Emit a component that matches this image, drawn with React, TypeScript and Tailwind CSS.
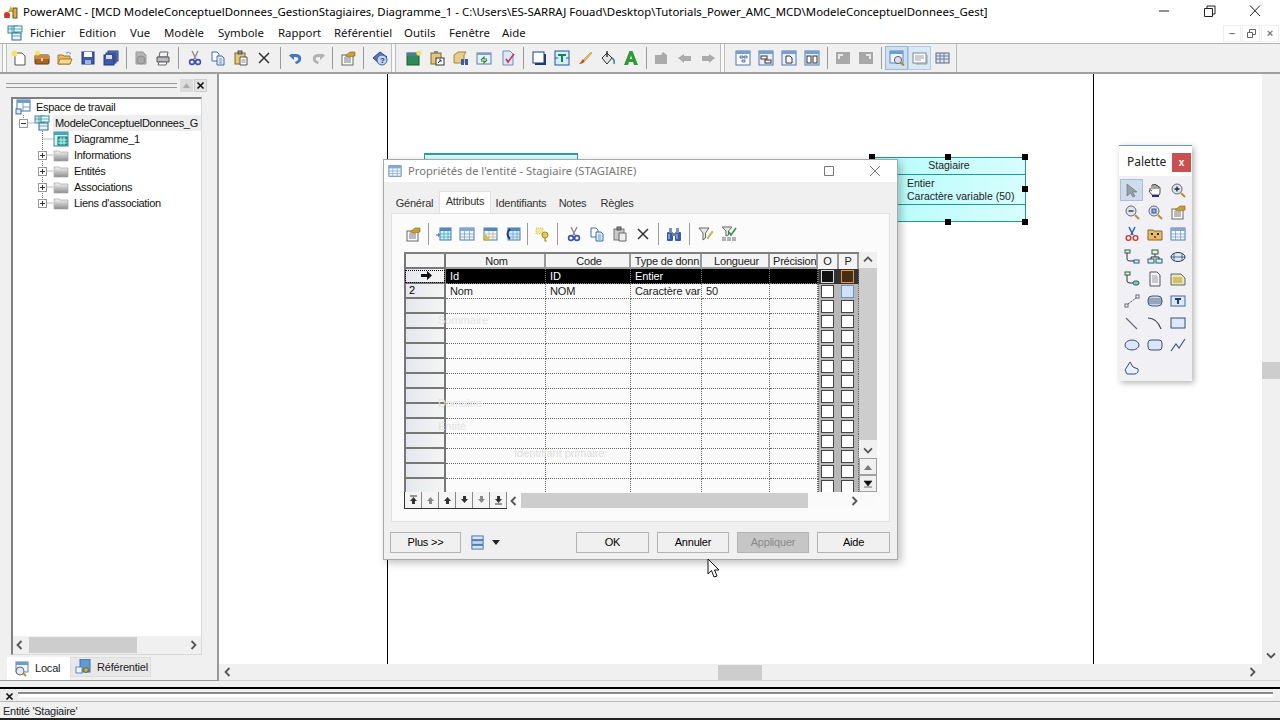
import React from 'react';

type IconProps = { name: string; size?: number };

// 16x16 drawings of the PowerAMC toolbar bitmaps
const drawings: Record<string, React.ReactNode> = {
  app: (<><path d="M1 14 L4 8 L7 14Z" fill="#c0392b" /><circle cx="4" cy="11" r="3" fill="#d9342b" /><path d="M5 8 L8 2 L10 8Z" fill="#e0a030" /><rect x="10" y="4" width="4" height="10" fill="#e6b422" stroke="#333" strokeWidth=".8" /></>),
  model: (<><rect x="1" y="1" width="9" height="7" fill="#cfe8f0" stroke="#3a8a9a" /><rect x="7" y="1" width="8" height="6" fill="#dff" stroke="#3a8a9a" /><rect x="5" y="8" width="9" height="7" fill="#e8f4f8" stroke="#2a6a9a" /><path d="M1 4h14M5 1v6M5 11h9" stroke="#3a8a9a" strokeWidth=".7" /></>),
  workspace: (<><rect x="2" y="1" width="13" height="11" fill="#fff" stroke="#3c6ea5" /><rect x="2" y="1" width="13" height="3" fill="#6d9ccd" /><path d="M8 4v8M8 8h7" stroke="#7a9cc0" /><rect x="1" y="10" width="5" height="5" fill="#dde8f5" stroke="#3c6ea5" /></>),
  diagram: (<><rect x="1" y="1" width="14" height="14" fill="#d6f0f4" stroke="#3a8a9a" /><rect x="1" y="1" width="14" height="3" fill="#4aa3b5" /><rect x="5" y="6" width="9" height="8" fill="#2fb3a8" stroke="#0a6a6a" /><path d="M5 9h9M5 12h9M8 6v8M11 6v8" stroke="#d6fff8" strokeWidth=".8" /></>),
  folder: (<><path d="M1 4 L6 4 L7 5 L15 5 L15 14 L1 14Z" fill="url(#fold)" stroke="#a8a8a8" strokeWidth=".7" /><defs><linearGradient id="fold" x1="0" x2="0" y1="0" y2="1"><stop offset="0" stopColor="#f4f4f4" /><stop offset="1" stopColor="#8e8e8e" /></linearGradient></defs></>),
  newdoc: (<><path d="M4 3 H11 L14 6 V15 H4Z" fill="#fff" stroke="#555" /><circle cx="3.5" cy="3.5" r="3" fill="#f2e36a" /></>),
  case: (<><rect x="1" y="5" width="14" height="9" rx="1" fill="#a5652a" stroke="#6b3c14" /><rect x="1" y="5" width="14" height="4" fill="#c78a45" /><circle cx="3.5" cy="3" r="2.5" fill="#f2e36a" /><rect x="7" y="8" width="2" height="3" fill="#f0d070" /></>),
  open: (<><path d="M1 5 H6 L7 6 H13 V14 H1Z" fill="#e8b860" stroke="#a87a28" /><path d="M3 9 H15 L13 14 H1Z" fill="#f6d998" stroke="#a87a28" /><path d="M9 3 Q12 1 14 4" stroke="#5a8fc0" fill="none" /></>),
  save: (<><rect x="2" y="2" width="12" height="12" fill="#3c5aa8" stroke="#223a78" /><rect x="4" y="2" width="8" height="5" fill="#fff" /><rect x="5" y="10" width="6" height="4" fill="#9fb4dc" /></>),
  saveall: (<><rect x="5" y="1" width="10" height="10" fill="#6a80bc" stroke="#2c4484" /><rect x="3" y="3" width="10" height="10" fill="#4f68ac" stroke="#2c4484" /><rect x="1" y="5" width="10" height="10" fill="#3c5aa8" stroke="#223a78" /><rect x="3" y="5" width="6" height="4" fill="#dde" /></>),
  preview: (<><path d="M3 2 H10 L13 5 V14 H3Z" fill="#b4b4b4" stroke="#9a9a9a" /><circle cx="8" cy="10" r="4" fill="#a8a8a8" stroke="#8e8e8e" /></>),
  print: (<><path d="M5 2 H13 L12 7 H4Z" fill="#f4f4f4" stroke="#666" /><path d="M2 7 H14 V12 H2Z" fill="#b8b8c0" stroke="#555" /><path d="M4 12 H12 L11 15 H3Z" fill="#fff" stroke="#666" /></>),
  cut: (<><path d="M5 1 L9 9 M11 1 L7 9" stroke="#8a8a8a" strokeWidth="1.4" /><circle cx="5" cy="12" r="2.4" fill="none" stroke="#3c50b0" strokeWidth="1.6" /><circle cx="11" cy="12" r="2.4" fill="none" stroke="#3c50b0" strokeWidth="1.6" /></>),
  copy: (<><path d="M2 2 H7 L9 4 V11 H2Z" fill="#fff" stroke="#3d6db5" /><path d="M7 6 H12 L14 8 V15 H7Z" fill="#e4eefa" stroke="#3d6db5" /><path d="M9 9h3M9 11h3M9 13h3" stroke="#3d6db5" strokeWidth=".7" /></>),
  paste: (<><rect x="2" y="3" width="10" height="11" fill="#e4c878" stroke="#84692a" /><rect x="5" y="1" width="4" height="3" fill="#888" stroke="#555" /><path d="M7 7 H14 V15 H7Z" fill="#fff" stroke="#555" /><path d="M8.5 10h4M8.5 12h4" stroke="#555" strokeWidth=".7" /></>),
  pastegray: (<><rect x="2" y="3" width="10" height="11" fill="#c8c8c8" stroke="#777" /><rect x="5" y="1" width="4" height="3" fill="#888" stroke="#555" /><path d="M7 7 H14 V15 H7Z" fill="#eee" stroke="#666" /></>),
  del: (<path d="M3 3 L13 13 M13 3 L3 13" stroke="#333" strokeWidth="1.5" />),
  undo: (<path d="M3 4 H9 Q14 5 13 10 Q12 13 8 14 L7 12 Q10 11 10.5 9 Q10 7 8 7 H6 V10 L1 5.5 L6 2Z" fill="#3f78c8" />),
  redo: (<path d="M13 4 H7 Q2 5 3 10 Q4 13 8 14 L9 12 Q6 11 5.5 9 Q6 7 8 7 H10 V10 L15 5.5 L10 2Z" fill="#b2b2b2" />),
  props: (<><rect x="2" y="5" width="11" height="10" fill="#fff" stroke="#666" /><path d="M4 8h7M4 10h7M4 12h7" stroke="#777" /><path d="M5 6 L10 2 H15 V6 L9 7Z" fill="#c9a030" stroke="#7f6418" strokeWidth=".6" /></>),
  help: (<><path d="M1 8 L8 2 L15 7 L8 14Z" fill="#5578c0" stroke="#2a4488" /><circle cx="10" cy="10" r="5" fill="#c5d4f0" stroke="#4060a0" /><text x="8" y="13" fontSize="8" fontWeight="700" fill="#223a78" fontFamily="Liberation Sans">?</text></>),
  newpkg: (<><rect x="1" y="3" width="12" height="12" fill="#2f8a56" stroke="#1c5a38" /><rect x="1" y="3" width="12" height="3" fill="#4d78a8" /><circle cx="13" cy="3" r="2.6" fill="#f2e36a" /></>),
  shortcut: (<><rect x="2" y="3" width="10" height="11" fill="#e4c878" stroke="#84692a" /><rect x="5" y="1" width="4" height="3" fill="#888" /><rect x="7" y="8" width="8" height="7" fill="#fff" stroke="#333" /><path d="M9 13 L12 10 M10 10h2v2" stroke="#1c3c9c" fill="none" /></>),
  findbox: (<><path d="M1 5 L5 2 H13 L11 5 V13 H1Z" fill="#e8cc8c" stroke="#a8883c" /><rect x="8" y="9" width="3" height="6" fill="#3c5aa8" /><rect x="12" y="9" width="3" height="6" fill="#3c5aa8" /></>),
  refresh: (<><rect x="1" y="3" width="14" height="11" fill="#e8f0f8" stroke="#5a7ea8" /><rect x="1" y="3" width="14" height="2" fill="#7aa0c8" /><path d="M5 10 L8 7 V9 H11 M11 10 L8 13 V11 H5" stroke="#2f8a36" fill="none" strokeWidth="1.1" /></>),
  check: (<><path d="M3 1 H10 L13 4 V15 H3Z" fill="#dbe8f8" stroke="#6a90c0" /><path d="M6 9 L8 12 L14 4" stroke="#c8324a" fill="none" strokeWidth="1.6" /></>),
  shadowrect: (<><rect x="4" y="4" width="11" height="11" fill="#1d3c78" /><rect x="2" y="2" width="11" height="11" fill="#fff" stroke="#1d3c78" /></>),
  tframe: (<><rect x="1" y="1" width="14" height="14" fill="#d7ecf4" stroke="#1d5a9c" /><path d="M4 4 H12 V6 H9 V12 H7 V6 H4Z" fill="#0e8a4a" /><path d="M1 8h3M12 8h3" stroke="#1d5a9c" /></>),
  brush: (<><path d="M14 2 L7 9 L8.5 10.5 L15 3Z" fill="#e4c04c" stroke="#a8882c" strokeWidth=".5" /><path d="M6 9 L8 11 Q6 14 2 14 Q4 12 6 9Z" fill="#c8482c" /></>),
  fill: (<><path d="M2 8 L7 3 L12 8 L7 14Z" fill="#e4e4e4" stroke="#333" /><path d="M7 1v6" stroke="#222" strokeWidth="1.3" /><path d="M12 8 Q15 10 14 14" stroke="#2f9a8a" fill="none" strokeWidth="1.6" /></>),
  green: (<path d="M6.5 1 H9.5 L15 15 H11 L10 12 H6 L5 15 H1Z M6.8 9 H9.2 L8 5.5Z" fill="#2f9a36" fillRule="evenodd" />),
  graybox: (<path d="M2 5 H8 L10 2 L14 5 V14 H2Z" fill="#ababab" />),
  grayleft: (<path d="M1 8 L7 4 V6 H14 V11 H7 V13Z" fill="#ababab" />),
  grayright: (<path d="M15 8 L9 4 V6 H2 V11 H9 V13Z" fill="#ababab" />),
  diaga: (<><rect x="1" y="1" width="14" height="14" fill="#fff" stroke="#4a78b0" /><rect x="1" y="1" width="14" height="3" fill="#74a0d0" /><path d="M5 6h3v2H5zM9 6h3v2H9zM7 10h3v2H7z" fill="#d8ecf4" stroke="#1c4c88" strokeWidth=".7" /></>),
  diagb: (<><rect x="1" y="1" width="14" height="14" fill="#eef" stroke="#4a78b0" /><rect x="1" y="1" width="14" height="3" fill="#74a0d0" /><rect x="3" y="6" width="6" height="3" fill="#fff" stroke="#333" /><rect x="7" y="10" width="6" height="3" fill="#fff" stroke="#333" /></>),
  diagc: (<><rect x="1" y="1" width="14" height="14" fill="#eef" stroke="#4a78b0" /><rect x="1" y="1" width="14" height="3" fill="#74a0d0" /><path d="M5 6 H9 L11 8 V13 H5Z" fill="#fff" stroke="#333" /></>),
  diagd: (<><rect x="1" y="1" width="14" height="14" fill="#eef" stroke="#4a78b0" /><rect x="1" y="1" width="14" height="3" fill="#74a0d0" /><rect x="3" y="6" width="4" height="7" fill="#fff" stroke="#333" /><rect x="9" y="6" width="4" height="7" fill="#fff" stroke="#333" /></>),
  grayin: (<><rect x="1" y="2" width="14" height="12" fill="#a8a8a8" /><path d="M3 4 H8 V6 H5 V9 H3Z" fill="#e8e8e8" /></>),
  grayout: (<><rect x="1" y="2" width="14" height="12" fill="#a8a8a8" /><path d="M13 4 H8 V6 H11 V9 H13Z" fill="#e8e8e8" /></>),
  browser: (<><rect x="1" y="1" width="13" height="12" fill="#eef4fc" stroke="#5a86c0" /><rect x="1" y="1" width="13" height="3" fill="#6d9ccd" /><circle cx="9" cy="10" r="3.6" fill="#dde" stroke="#666" /><path d="M12 13 L15 15.5" stroke="#a8882c" strokeWidth="1.8" /></>),
  output: (<><rect x="1" y="3" width="13" height="10" fill="#fff" stroke="#7a8696" /><path d="M3 6h9M3 8h9M3 10h6" stroke="#7a8696" strokeWidth=".8" /><path d="M15 5v9H4" stroke="#99a" fill="none" /></>),
  result: (<><rect x="1" y="3" width="13" height="10" fill="#dde4f0" stroke="#5a6a88" /><path d="M1 6h13M1 9h13M5 3v10M9 3v10" stroke="#5a6a88" strokeWidth=".8" /></>),
  tbl: (<><rect x="1" y="2" width="14" height="12" fill="#f4f8fc" stroke="#4f7cae" /><rect x="1" y="2" width="14" height="3" fill="#82a8d0" /><path d="M1 8h14M1 11h14M5.5 5v9M10.5 5v9" stroke="#7aa0c8" strokeWidth=".8" /></>),
  tblin: (<><rect x="4" y="2" width="11" height="12" fill="#d8f0f4" stroke="#3f78b0" /><rect x="4" y="2" width="11" height="3" fill="#4f88c0" /><path d="M4 8h11M4 11h11M8 5v9M12 5v9" stroke="#3fa8b8" strokeWidth=".8" /><path d="M0 9h3M2 7.5 L3.6 9 L2 10.5" stroke="#2060b0" fill="none" /></>),
  tblplus: (<><rect x="2" y="2" width="13" height="12" fill="#fdf6dc" stroke="#4f7cae" /><rect x="2" y="2" width="13" height="3" fill="#4f88c0" /><path d="M2 8h13M2 11h13M7 5v9M11 5v9" stroke="#a8b8c8" strokeWidth=".8" /><path d="M4 9v6M1 12h6" stroke="#d8c030" strokeWidth="2" /></>),
  tbllink: (<><rect x="3" y="2" width="12" height="12" fill="#d8f0f4" stroke="#4f7cae" /><rect x="3" y="2" width="12" height="3" fill="#4f88c0" /><path d="M3 8h12M3 11h12M8 5v9M12 5v9" stroke="#7aa0c8" strokeWidth=".8" /><path d="M5 3 Q0 8 5 13" stroke="#1c3c9c" fill="none" strokeWidth="2" /></>),
  key: (<><path d="M2 2h7v6H2z" fill="#f6e6a0" stroke="#d8c060" strokeDasharray="1 1" /><circle cx="11" cy="9" r="3" fill="#e8c84c" stroke="#a8882c" /><path d="M11 12v3h2" stroke="#a8882c" fill="none" strokeWidth="1.2" /></>),
  find: (<><rect x="1" y="6" width="6" height="9" rx="1" fill="#3c5aa8" /><rect x="9" y="6" width="6" height="9" rx="1" fill="#3c5aa8" /><rect x="3" y="2" width="3" height="5" fill="#7a90c8" /><rect x="10" y="2" width="3" height="5" fill="#7a90c8" /><rect x="6" y="7" width="4" height="3" fill="#6a7ea8" /><path d="M3 8v5M11 8v5" stroke="#c8d4f0" /></>),
  filter: (<><path d="M1 2 H11 L7.5 7 V12 L5 14 V7Z" fill="#e8e8e8" stroke="#666" /><path d="M9 12 L14 5 L15 6 L10 13Z" fill="#d8c060" stroke="#a8882c" strokeWidth=".5" /></>),
  filterok: (<><path d="M1 1 H11 L7.5 5 V9 L5 10 V5Z" fill="#e8e8e8" stroke="#666" /><path d="M8 6 L10 9 L15 2" stroke="#2f9a36" fill="none" strokeWidth="1.6" /><path d="M1 12h4M6 12h4M11 12h4M1 14h4M6 14h4M11 14h4" stroke="#667" strokeWidth="1" /></>),
  stack: (<><rect x="2" y="1" width="12" height="4" fill="#d8e4f8" stroke="#3d6db5" /><rect x="2" y="6" width="12" height="4" fill="#c4d4f0" stroke="#3d6db5" /><rect x="2" y="11" width="12" height="4" fill="#d8e4f8" stroke="#3d6db5" /></>),
  arrow: (<path d="M3 2 L13 10 L8.5 10 L11 14 L9 15 L6.5 11 L3 14Z" fill="#9aa0a8" stroke="#667" strokeWidth=".6" />),
  hand: (<><path d="M3 8 V6 M5 7 V3 Q6 2 7 3 V7 M7 3 Q8 1 9 3 V7 M9 3.5 Q10 2.5 11 4 V7 M11 5 Q12.5 4 13 6 V10 Q13 12 12 13 H5 L2 9 Q3 7 5 9" fill="#fff" stroke="#222" strokeWidth=".8" /><rect x="5" y="13" width="7" height="2" fill="#1c2c9c" /></>),
  zoomin: (<><circle cx="7" cy="7" r="5" fill="#dde4ec" stroke="#667" /><path d="M4.5 7h5M7 4.5v5" stroke="#223" strokeWidth="1.3" /><path d="M11 11 L15 15" stroke="#b09030" strokeWidth="2" /></>),
  zoomout: (<><circle cx="7" cy="7" r="5" fill="#dde4ec" stroke="#667" /><path d="M4.5 7h5" stroke="#223" strokeWidth="1.3" /><path d="M11 11 L15 15" stroke="#b09030" strokeWidth="2" /></>),
  zoomfit: (<><circle cx="7" cy="7" r="5" fill="#dde4ec" stroke="#667" /><rect x="5" y="5" width="4" height="4" fill="#8aa8d8" stroke="#3c5aa8" /><path d="M11 11 L15 15" stroke="#b09030" strokeWidth="2" /></>),
  scissors: (<><path d="M5 1 L9 9 M11 1 L7 9" stroke="#2860c0" strokeWidth="1.5" /><circle cx="4.5" cy="12" r="2.4" fill="none" stroke="#c83030" strokeWidth="1.3" /><circle cx="11.5" cy="12" r="2.4" fill="none" stroke="#c83030" strokeWidth="1.3" /></>),
  pkg: (<><path d="M1 4 H6 L7 5 H15 V14 H1Z" fill="#e4bc64" stroke="#84692a" /><rect x="4" y="7" width="2" height="2" fill="#222" /><rect x="10" y="7" width="2" height="2" fill="#222" /><rect x="7" y="10" width="2" height="2" fill="#c03030" /></>),
  linka: (<><rect x="1" y="1" width="5" height="3" fill="#f4f4c8" stroke="#2a5a5a" /><rect x="10" y="11" width="5" height="3" fill="#d8f0f4" stroke="#2a5a7a" /><path d="M3 4 V10 Q3 12 6 12 H10" stroke="#333" fill="none" /></>),
  linkb: (<><rect x="5" y="1" width="6" height="4" fill="#f4f4c8" stroke="#2a5a5a" /><rect x="1" y="10" width="6" height="4" fill="#d8f0f4" stroke="#2a5a7a" /><rect x="9" y="10" width="6" height="4" fill="#d8f0f4" stroke="#2a5a7a" /><path d="M8 5 V8 M4 10 V8 H12 V10" stroke="#333" fill="none" /></>),
  oval: (<><ellipse cx="8" cy="8" rx="7" ry="4.5" fill="#dde8f8" stroke="#223a58" /><path d="M1 8h14M4 5v6M12 5v6" stroke="#223a58" strokeWidth=".7" /></>),
  linkc: (<><rect x="1" y="1" width="5" height="3" fill="#f4f4c8" stroke="#2a5a5a" /><rect x="9" y="10" width="6" height="4" rx="2" fill="#8acca0" stroke="#2a5a7a" /><path d="M3 4 V10 Q3 12 6 12 H9" stroke="#333" fill="none" /></>),
  file: (<><path d="M3 1 H10 L13 4 V15 H3Z" fill="#f4f4f4" stroke="#556" /><path d="M5 5h5M5 7h6M5 9h6M5 11h6" stroke="#778" strokeWidth=".7" /></>),
  note: (<><path d="M1 3 H11 L15 7 V14 H1Z" fill="#f4e49c" stroke="#4f6a90" /><path d="M3 7h9M3 9h9M3 11h9" stroke="#9a8a3a" strokeWidth=".8" /></>),
  nodes: (<><rect x="1" y="11" width="3" height="3" fill="#fff" stroke="#667" /><rect x="12" y="2" width="3" height="3" fill="#fff" stroke="#667" /><path d="M4 11 L12 5" stroke="#556" strokeDasharray="2 1" /></>),
  drum: (<><rect x="1" y="3" width="14" height="10" rx="4" fill="#c8d4e8" stroke="#4a5a7a" /><path d="M1 6h14M1 8h14M1 10h14" stroke="#4a5a7a" strokeWidth=".8" /></>),
  text: (<><rect x="1" y="3" width="14" height="10" fill="#dde8f8" stroke="#4a6a9a" /><path d="M5 5 H11 V7 H9 V11 H7 V7 H5Z" fill="#1c3c7c" /></>),
  line: (<path d="M2 3 L13 14" stroke="#667" strokeWidth="1.1" />),
  arc: (<path d="M1 3 Q10 3 14 14" stroke="#445" fill="none" strokeWidth="1.1" />),
  rect: (<><rect x="1" y="3" width="14" height="10" fill="#dfe8f8" stroke="#3a4e72" /></>),
  ellipse: (<ellipse cx="8" cy="8" rx="7" ry="5" fill="#dde6f6" stroke="#3a4e72" />),
  round: (<rect x="1" y="3" width="14" height="10" rx="3" fill="#dde6f6" stroke="#3a4e72" />),
  poly: (<path d="M1 14 L6 7 L9 11 L15 2" stroke="#3a4e72" fill="none" strokeWidth="1.1" />),
  curve: (<path d="M3 14 L1 10 L6 2 L9 7 L14 9 Q15 13 11 14Z" fill="#eaf0fa" stroke="#3a4e72" />),
  local: (<><rect x="3" y="1" width="12" height="10" fill="#eef4fc" stroke="#5a86c0" /><rect x="3" y="1" width="12" height="3" fill="#6d9ccd" /><circle cx="7" cy="10" r="4" fill="#e4e8f0" stroke="#667" /><path d="M10 12 L13 15" stroke="#b09030" strokeWidth="2" /></>),
  repo: (<><rect x="5" y="0" width="10" height="13" fill="#5f9ad4" stroke="#3a70a8" /><rect x="1" y="8" width="6" height="6" fill="#eef4fc" stroke="#5a86c0" /><circle cx="11" cy="11" r="2.4" fill="#c8b050" stroke="#786018" /></>),
};

function Icon({ name, size = 16 }: IconProps) {
  return (
    <svg width={size} height={size} viewBox="0 0 16 16" className="shrink-0">
      {drawings[name]}
    </svg>
  );
}

function Sep({ className }: { className: string }) {
  return (
    <div className={`flex justify-center ${className}`}>
      <div className="h-[22px] w-px bg-[#9a9a9a]" />
    </div>
  );
}

function ToolGroup({ names, className }: { names: string[]; className: string }) {
  return (
    <>
      {names.map((n, i) => (
        <div key={n + i} className={`flex justify-center items-center ${className}`}>
          <Icon name={n} />
        </div>
      ))}
    </>
  );
}

function TitleBar() {
  return (
    <div className="h-[23px] bg-white flex items-center shrink-0">
      <div className="ml-[3px] mr-[4px]"><Icon name="app" /></div>
      <div className="font-['Noto_Sans'] text-[11.43px] text-black whitespace-nowrap w-[1120px] overflow-hidden">
        PowerAMC - [MCD ModeleConceptuelDonnees_GestionStagiaires, Diagramme_1 - C:\Users\ES-SARRAJ Fouad\Desktop\Tutorials_Power_AMC_MCD\ModeleConceptuelDonnees_Gest]
      </div>
      <svg width="120" height="23" viewBox="0 0 120 23" className="ml-auto mr-[1px]">
        <path d="M0 11h10" stroke="#222" />
        <path d="M45.5 8.5h8v8h-8z M48 8V6h8v8h-2" stroke="#222" fill="none" />
        <path d="M91 5.5 L101 16 M101 5.5 L91 16" stroke="#222" />
      </svg>
    </div>
  );
}

function MenuBar() {
  const items: [string, string][] = [
    ['Fichier', 'w-[49px]'], ['Edition', 'w-[51px]'], ['Vue', 'w-[34px]'], ['Modèle', 'w-[54px]'], ['Symbole', 'w-[60px]'],
    ['Rapport', 'w-[56px]'], ['Référentiel', 'w-[70px]'], ['Outils', 'w-[45px]'], ['Fenêtre', 'w-[53px]'], ['Aide', 'w-[30px]'],
  ];
  return (
    <div className="h-[21px] bg-white flex items-center shrink-0 border-b border-[#b0b0b0]">
      <div className="ml-[7px] mr-[7px]"><Icon name="model" /></div>
      {items.map(([t, w]) => (
        <div key={t} className={`font-['Noto_Sans'] text-[11.4px] text-[#111] ${w}`}>{t}</div>
      ))}
      <div className="ml-auto mr-[1px] flex gap-[1px]">
        {['–', '🗗', '×'].map((g, i) => (
          <div key={i} className="w-[18px] h-[17px] border border-[#eeeeee] flex items-center justify-center text-[11px] font-bold text-[#777]">
            {i === 1 ? <svg width="9" height="9" viewBox="0 0 9 9"><path d="M.5 3.5h5v5h-5z M2.5 3V.5h6v5H6" stroke="#666" fill="none" /></svg> : g}
          </div>
        ))}
      </div>
    </div>
  );
}

function Grip() {
  return <div className="w-[5px] h-[28px] border-x border-[#bdbdbd] bg-[#f8f8f8] shrink-0" />;
}

function ToolBar() {
  return (
    <div className="h-[30px] bg-[#f0f0f0] border-b-2 border-[#a0a0a0] flex items-center shrink-0 pl-[2px]">
      <Grip />
      <ToolGroup names={['newdoc', 'case', 'open', 'save', 'saveall']} className="w-[23px]" />
      <Sep className="w-[8px]" />
      <ToolGroup names={['preview', 'print']} className="w-[22px]" />
      <Sep className="w-[9px]" />
      <ToolGroup names={['cut', 'copy', 'paste', 'del']} className="w-[23px]" />
      <Sep className="w-[10px]" />
      <ToolGroup names={['undo', 'redo']} className="w-[22px]" />
      <Sep className="w-[7px]" />
      <ToolGroup names={['props']} className="w-[23px]" />
      <Sep className="w-[9px]" />
      <ToolGroup names={['help']} className="w-[23px]" />
      <Grip />
      <div className="w-[6px]" />
      <ToolGroup names={['newpkg', 'shortcut', 'findbox', 'refresh', 'check']} className="w-[23.5px]" />
      <Sep className="w-[8px]" />
      <ToolGroup names={['shadowrect', 'tframe', 'brush', 'fill', 'green']} className="w-[23px]" />
      <Sep className="w-[7px]" />
      <ToolGroup names={['graybox', 'grayleft', 'grayright']} className="w-[23.5px]" />
      <Grip />
      <div className="w-[6px]" />
      <ToolGroup names={['diaga', 'diagb', 'diagc', 'diagd']} className="w-[23px]" />
      <Sep className="w-[8px]" />
      <ToolGroup names={['grayin', 'grayout']} className="w-[23px]" />
      <Sep className="w-[8px]" />
      <div className="w-[23px] h-[24px] bg-[#cfe0f2] border border-[#9ab8d8] flex items-center justify-center"><Icon name="browser" /></div>
      <div className="w-[23px] h-[24px] bg-[#dbe8f5] border border-[#b4cce4] flex items-center justify-center"><Icon name="output" /></div>
      <ToolGroup names={['result']} className="w-[23px]" />
      <div className="h-[28px] w-px bg-[#bdbdbd] ml-[2px]" />
    </div>
  );
}

function Chevron({ dir, className }: { dir: 'l' | 'r' | 'u' | 'd'; className?: string }) {
  const d = { l: 'M6.5 1 L2.5 5 L6.5 9', r: 'M3.5 1 L7.5 5 L3.5 9', u: 'M1 6.5 L5 2.5 L9 6.5', d: 'M1 3.5 L5 7.5 L9 3.5' }[dir];
  return (
    <svg width="10" height="10" viewBox="0 0 10 10" className={className}>
      <path d={d} stroke="#555" strokeWidth="1.8" fill="none" />
    </svg>
  );
}

function TreeRow({ level, expander, icon, label, selected, last }: { level: number; expander?: '+' | '-'; icon: string; label: string; selected?: boolean; last?: boolean }) {
  return (
    <div className="h-[16px] flex items-center">
      {level > 0 && (
        <svg width={level === 1 ? 21 : 40} height="16" viewBox={`0 0 ${level === 1 ? 21 : 40} 16`} className="shrink-0">
          {level === 1 && <path d="M10.5 0V8 M10.5 8H21" stroke="#777" strokeDasharray="1 1" />}
          {level === 2 && (
            <>
              <path d={last ? 'M29.5 0V8' : 'M29.5 0V16'} stroke="#777" strokeDasharray="1 1" />
              <path d="M29.5 8H40" stroke="#777" strokeDasharray="1 1" />
            </>
          )}
          {expander && (
            <g transform={`translate(${level === 1 ? 6 : 25} 4)`}>
              <rect x=".5" y=".5" width="8" height="8" fill="#fff" stroke="#999" />
              <path d={expander === '+' ? 'M2 4.5h5M4.5 2v5' : 'M2 4.5h5'} stroke="#333" />
            </g>
          )}
        </svg>
      )}
      {level === 0 && <div className="w-[2px]" />}
      <Icon name={icon} />
      <div className={`ml-[3px] h-[16px] leading-[16px] text-[11px] tracking-[-0.3px] text-[#111] whitespace-nowrap overflow-hidden flex-1 pl-[2px] ${selected ? 'bg-[#eeeeee]' : ''}`}>{label}</div>
    </div>
  );
}

function Browser() {
  return (
    <div className="w-[219px] shrink-0 bg-[#f0f0f0] border-r-2 border-b border-[#9a9a9a] flex flex-col">
      <div className="h-[22px] mb-[1px] flex items-center pl-[6px] pr-[10px]">
        <div className="flex-1 h-[5px] border-y border-[#9a9a9a]" />
        <div className="w-[13px] h-[13px] ml-[3px] bg-[#dcdcdc] flex items-center justify-center">
          <svg width="9" height="7" viewBox="0 0 9 7"><path d="M4.5 1 L8 6 H1Z" fill="#aaa" /></svg>
        </div>
        <div className="w-[13px] h-[13px] ml-[1px] bg-[#e4e4e4] border border-[#ccc] flex items-center justify-center">
          <svg width="9" height="9" viewBox="0 0 9 9"><path d="M1.5 1.5 L7.5 7.5 M7.5 1.5 L1.5 7.5" stroke="#111" strokeWidth="1.6" /></svg>
        </div>
      </div>
      <div className="mx-[11px] w-[191px] h-[558px] border-l-2 border-t-2 border-[#808080] border-r border-r-[#d8d8d8] border-b border-b-[#d8d8d8] bg-white flex flex-col">
        <div className="flex-1 overflow-hidden">
          <TreeRow level={0} icon="workspace" label="Espace de travail" />
          <TreeRow level={1} expander="-" icon="model" label="ModeleConceptuelDonnees_G" selected />
          <TreeRow level={2} icon="diagram" label="Diagramme_1" />
          <TreeRow level={2} expander="+" icon="folder" label="Informations" />
          <TreeRow level={2} expander="+" icon="folder" label="Entités" />
          <TreeRow level={2} expander="+" icon="folder" label="Associations" />
          <TreeRow level={2} expander="+" icon="folder" label="Liens d'association" last />
        </div>
        <div className="h-[18px] bg-[#f0f0f0] flex items-center">
          <Chevron dir="l" className="ml-[2px]" />
          <div className="w-[108px] h-[16px] ml-[4px] bg-[#cdcdcd]" />
          <Chevron dir="r" className="ml-auto mr-[3px]" />
        </div>
      </div>
      <div className="mt-[2px] ml-[7px] flex items-start text-[11px] tracking-[-0.2px] text-[#222]">
        <div className="w-[63px] h-[23px] bg-white flex items-center pl-[6px] gap-[6px]"><Icon name="local" />Local</div>
        <div className="w-[81px] h-[20px] bg-[#e8e8e8] border border-[#dcdcdc] flex items-center pl-[4px] gap-[6px]"><Icon name="repo" />Référentiel</div>
      </div>
    </div>
  );
}

function Handle({ className }: { className: string }) {
  return <div className={`absolute w-[6px] h-[6px] bg-black ${className}`} />;
}

function EntitySymbols() {
  return (
    <>
      <div className="absolute left-[205px] top-[79px] w-[154px] h-[40px] border-t-2 border-x border-[#2aa198] bg-[#d6fbfb]" />
      <div className="absolute left-[653px] top-[83px] w-[154px] h-[65px] border border-[#1f9a9a] bg-gradient-to-r from-[#b4fcfc] to-[#d8fdfd] flex flex-col text-[10.5px] text-[#222]">
        <div className="h-[17px] border-b border-[#1f9a9a] text-center leading-[15px]">Stagiaire</div>
        <div className="h-[30px] border-b border-[#1f9a9a] pl-[34px] pt-[2px] leading-[12.5px] whitespace-nowrap">
          <div>Entier</div>
          <div>Caractère variable (50)</div>
        </div>
      </div>
      <Handle className="left-[650px] top-[80px]" />
      <Handle className="left-[726px] top-[80px]" />
      <Handle className="left-[803px] top-[80px]" />
      <Handle className="left-[803px] top-[112px]" />
      <Handle className="left-[726px] top-[145px]" />
      <Handle className="left-[803px] top-[145px]" />
    </>
  );
}

function Workspace() {
  return (
    <div className="flex-1 flex flex-col min-w-0">
      <div className="flex-1 flex min-h-0">
        <div className="flex-1 relative bg-white overflow-hidden">
          <div className="absolute left-[168px] top-0 bottom-0 w-[707px] border-x border-black" />
          <EntitySymbols />
        </div>
        <div className="w-[18px] bg-[#f0f0f0] flex flex-col items-center">
          <div className="mt-[288px] w-[18px] h-[17px] bg-[#cdcdcd]" />
          <Chevron dir="d" className="mt-auto mb-[4px]" />
        </div>
      </div>
      <div className="h-[17px] bg-[#f0f0f0] flex items-center border-b border-[#d4d4d4]">
        <Chevron dir="l" className="ml-[4px]" />
        <div className="ml-[485px] w-[44px] h-[15px] bg-[#cdcdcd]" />
        <Chevron dir="r" className="ml-auto mr-[23px]" />
      </div>
    </div>
  );
}

function BottomBars() {
  return (
    <div className="h-[39px] shrink-0 bg-[#f0f0f0] flex flex-col">
      <div className="h-[6px]" />
      <div className="h-[2px] bg-black" />
      <div className="h-[13px] flex items-start border-b border-[#b8b8b8]">
        <div className="w-[18px] h-[12px] flex items-end justify-center bg-[#ececec]">
          <svg width="9" height="9" viewBox="0 0 9 9"><path d="M1.5 1.5 L7.5 7.5 M7.5 1.5 L1.5 7.5" stroke="#111" strokeWidth="1.7" /></svg>
        </div>
        <div className="flex-1 mt-[3px] mr-[7px] h-[5px] border-t-2 border-[#8a8a8a] bg-white" />
      </div>
      <div className="h-[16px] flex items-center pl-[3px] pt-[2px] text-[11px] tracking-[-0.25px] text-[#222]">Entité 'Stagiaire'</div>
      <div className="h-[2px] bg-[#222]" />
    </div>
  );
}

const columns = [
  { label: 'Nom', cell: 'w-[100px]', row1: 'Id', row2: 'Nom', pad: 'pl-[4px]' },
  { label: 'Code', cell: 'w-[85px]', row1: 'ID', row2: 'NOM', pad: 'pl-[4px]' },
  { label: 'Type de donn', cell: 'w-[71px]', row1: 'Entier', row2: 'Caractère var', pad: 'pl-[4px]' },
  { label: 'Longueur', cell: 'w-[68px]', row1: '', row2: '50', pad: 'pl-[4px]' },
  { label: 'Précision', cell: 'w-[48px]', row1: '', row2: '', pad: 'pl-[4px]' },
];

function Check({ className }: { className: string }) {
  return <div className={`w-[13px] h-[13px] border-[1.5px] ${className}`} />;
}

function GridRow({ index }: { index: number }) {
  const first = index === 0;
  const second = index === 1;
  return (
    <div className={`h-[15px] flex shrink-0 ${first ? 'bg-black text-white' : 'text-[#222]'}`}>
      <div className={`w-[42px] h-[15px] border-x-2 border-b-2 border-[#777] bg-gradient-to-r from-[#e4e8ee] to-[#f4f4f4] text-black text-[11px] leading-[13px] pl-[3px] flex items-center ${first ? 'outline-1 outline-dotted outline-black -outline-offset-2 justify-center' : ''}`}>
        {first && <svg width="11" height="9" viewBox="0 0 11 9"><path d="M0 3h6V0l5 4.5L6 9V6H0z" fill="#111" /></svg>}
        {second && '2'}
      </div>
      {columns.map((c) => (
        <div key={c.label} className={`${c.cell} ${c.pad} h-[15px] leading-[14px] text-[11px] tracking-[-0.1px] whitespace-nowrap overflow-hidden border-r border-b border-dotted ${first ? 'border-[#777]' : 'border-[#666]'}`}>
          {first ? c.row1 : second ? c.row2 : ''}
        </div>
      ))}
      <div className={`w-[41px] h-[15px] flex gap-[7px] items-center pl-[2px] border-x border-dotted border-[#666] ${first ? 'bg-[#333]' : 'bg-[#b8b8b8]'}`}>
        <Check className={first ? 'bg-[#111] border-[#ddd]' : 'bg-white border-[#444]'} />
        <Check className={first ? 'bg-[#4a2c10] border-[#d89858]' : second ? 'bg-[#cfe2f8] border-[#6e93c0]' : 'bg-white border-[#444]'} />
      </div>
    </div>
  );
}

function AttributeGrid() {
  const nav = ['⤒', '⇑', '↑', '↓', '⇓', '⤓'];
  return (
    <div className="ml-[12px] w-[473px] flex flex-col">
      <div className="flex h-[240px]">
        <div className="w-[455px] flex flex-col border-t-2 border-[#808080] overflow-hidden">
          <div className="h-[15px] flex shrink-0 text-[11px] tracking-[-0.2px] text-[#222] bg-[#f4f4f4]">
            <div className="w-[42px] border-x-2 border-b-2 border-[#777]" />
            {columns.map((c) => (
              <div key={c.label} className={`${c.cell} pl-[3px] text-center leading-[14px] whitespace-nowrap overflow-hidden border-r-2 border-b-2 border-[#9a9a9a]`}>{c.label}</div>
            ))}
            <div className="w-[21px] text-center leading-[14px] border-r-2 border-[#9a9a9a]">O</div>
            <div className="w-[20px] text-center leading-[14px] border-r-2 border-[#9a9a9a]">P</div>
          </div>
          {Array.from({ length: 16 }, (_, i) => <GridRow key={i} index={i} />)}
        </div>
        <div className="w-[18px] bg-[#f0f0f0] flex flex-col items-center">
          <Chevron dir="u" className="mt-[3px] mb-[3px]" />
          <div className="w-[18px] h-[174px] bg-[#cdcdcd]" />
          <Chevron dir="d" className="mt-[5px]" />
          <div className="w-[18px] h-[17px] mt-[3px] border border-[#a0a0a0] flex items-center justify-center text-[9px] text-[#666]">
            <svg width="10" height="8" viewBox="0 0 10 8"><path d="M5 2 L9 7 H1Z" fill="#777" /></svg>
          </div>
          <div className="w-[18px] h-[17px] border border-[#a0a0a0] flex items-center justify-center">
            <svg width="10" height="8" viewBox="0 0 10 8"><path d="M5 6 L9 1 H1Z M1 7h8" fill="#111" stroke="#111" strokeWidth=".6" /></svg>
          </div>
        </div>
      </div>
      <div className="h-[17px] flex items-center bg-[#fafafa]">
        <div className="flex border-l border-b border-[#333]">
          {nav.map((g, i) => (
            <div key={i} className="w-[17px] h-[16px] border-r border-[#888] flex items-center justify-center bg-[#f4f4f4]">
              <svg width="9" height="10" viewBox="0 0 9 10">
                <path d={i < 3 ? 'M4.5 2 L8 6 H6 V9 H3 V6 H1Z' : 'M4.5 8 L8 4 H6 V1 H3 V4 H1Z'} fill={i === 1 || i === 4 ? '#888' : '#333'} />
                {i === 0 && <path d="M1 1h7" stroke="#333" />}
                {i === 5 && <path d="M1 9h7" stroke="#333" />}
              </svg>
            </div>
          ))}
        </div>
        <Chevron dir="l" className="ml-[2px]" />
        <div className="ml-[2px] w-[287px] h-[15px] bg-[#cdcdcd]" />
        <Chevron dir="r" className="ml-[41px]" />
      </div>
    </div>
  );
}

function FootButton({ label, className }: { label: string; className: string }) {
  return <div className={`h-[21px] flex items-center justify-center text-[11px] tracking-[-0.2px] border border-[#b4b4b4] ${className}`}>{label}</div>;
}

function PropertiesDialog() {
  return (
    <div className="absolute left-[383px] top-[159px] w-[515px] h-[401px] flex flex-col bg-[#f0f0f0] border border-[#a8a8a8] shadow-[3px_3px_8px_rgba(0,0,0,0.25)] font-['Liberation_Sans']">
      <div className="h-[22px] bg-white flex items-center pl-[4px] shrink-0">
        <Icon name="tbl" size={14} />
        <div className="ml-[6px] font-['Noto_Sans'] text-[11.2px] text-[#777]">Propriétés de l'entité - Stagiaire (STAGIAIRE)</div>
        <svg width="70" height="14" viewBox="0 0 70 14" className="ml-auto mr-[3px]">
          <path d="M0.5 2.5h9v9h-9z" stroke="#777" fill="none" />
          <path d="M46 2 L56 12 M56 2 L46 12" stroke="#777" />
        </svg>
      </div>
      <div className="h-[31px] flex items-end pl-[9px] text-[11px] tracking-[-0.2px] text-[#333] shrink-0">
        <div className="h-[20px] leading-[20px] text-center w-[43px]">Général</div>
        <div className="h-[22px] w-[52px] mx-[3px] leading-[18px] text-center bg-white border border-b-0 border-[#e0e0e0]">Attributs</div>
        <div className="h-[20px] leading-[20px] text-center w-[54px]">Identifiants</div>
        <div className="h-[20px] leading-[20px] text-center w-[49px]">Notes</div>
        <div className="h-[20px] leading-[20px] text-center w-[40px]">Règles</div>
      </div>
      <div className="mx-[7px] h-[309px] bg-[#fbfbfb] border border-[#e0e0e0] flex flex-col shrink-0 relative">
        <div className="h-[38px] flex items-center pl-[9px] pt-[1px] shrink-0">
          <ToolGroup names={['props']} className="w-[24px]" />
          <Sep className="w-[7px]" />
          <ToolGroup names={['tblin', 'tbl', 'tblplus', 'tbllink']} className="w-[23px]" />
          <Sep className="w-[6px]" />
          <ToolGroup names={['key']} className="w-[23px]" />
          <Sep className="w-[9px]" />
          <ToolGroup names={['cut', 'copy', 'pastegray', 'del']} className="w-[23px]" />
          <Sep className="w-[8px]" />
          <ToolGroup names={['find']} className="w-[23px]" />
          <Sep className="w-[9px]" />
          <ToolGroup names={['filter', 'filterok']} className="w-[23px]" />
        </div>
        <AttributeGrid />
        <div className="absolute left-[46px] top-[98px] text-[11px] text-[#e2e2e2] pointer-events-none">Sommaire</div>
        <div className="absolute left-[46px] top-[181px] text-[11px] text-[#e2e2e2] pointer-events-none">Domaine</div>
        <div className="absolute left-[46px] top-[204px] text-[11px] text-[#e2e2e2] pointer-events-none">Entité</div>
        <div className="absolute left-[122px] top-[231px] text-[11px] text-[#dedede] pointer-events-none">Identifiant primaire</div>
      </div>
      <div className="mt-[10px] flex items-start pl-[6px] pr-[7px]">
        <FootButton label="Plus >>" className="w-[71px]" />
        <div className="ml-[9px] mt-[3px]"><Icon name="stack" size={15} /></div>
        <svg width="8" height="5" viewBox="0 0 8 5" className="ml-[7px] mt-[8px]"><path d="M0 0h8L4 5z" fill="#222" /></svg>
        <div className="ml-auto flex gap-[8px]">
          <FootButton label="OK" className="w-[73px]" />
          <FootButton label="Annuler" className="w-[72px]" />
          <FootButton label="Appliquer" className="w-[72px] bg-[#c6c6c6] text-[#8a8a8a]" />
          <FootButton label="Aide" className="w-[73px]" />
        </div>
      </div>
    </div>
  );
}

function Palette() {
  const names = ['arrow', 'hand', 'zoomin', 'zoomout', 'zoomfit', 'props', 'scissors', 'pkg', 'tbl', 'linka', 'linkb', 'oval', 'linkc', 'file', 'note', 'nodes', 'drum', 'text', 'line', 'arc', 'rect', 'ellipse', 'round', 'poly', 'curve'];
  return (
    <div className="absolute left-[1119px] top-[145px] w-[73px] h-[236px] bg-[#f0f0f5] border-t border-[#6a9ab0] shadow-[2px_2px_6px_rgba(0,0,0,0.3)] font-['Liberation_Sans']">
      <div className="h-[30px] pt-[2px] bg-white flex items-center pl-[8px]">
        <span className="text-[12px] text-[#222] font-['Noto_Sans']">Palette</span>
        <div className="ml-auto mr-[1px] w-[19px] h-[19px] bg-[#c9504f] text-white text-[10px] font-bold flex items-center justify-center">x</div>
      </div>
      <div className="grid grid-cols-[repeat(3,23px)] auto-rows-[22.2px] pl-[1px] pt-[3px]">
        {names.map((n, i) => (
          <div key={n} className={`flex items-center justify-center ${i === 0 ? 'bg-[#cfdcec] border border-[#a8c0d8]' : ''}`}>
            <Icon name={n} />
          </div>
        ))}
      </div>
    </div>
  );
}

export default function App() {
  return (
    <div className="relative w-[1280px] h-[720px] overflow-hidden bg-white flex flex-col font-['Liberation_Sans',sans-serif]">
      <TitleBar />
      <MenuBar />
      <ToolBar />
      <div className="flex-1 flex min-h-0">
        <Browser />
        <Workspace />
      </div>
      <BottomBars />
      <PropertiesDialog />
      <Palette />
      <svg width="14" height="21" viewBox="0 0 14 21" className="absolute left-[707px] top-[558px]">
        <path d="M1 1 V16 L4.5 12.5 L7 19 L10 18 L7.5 12 H12Z" fill="#fff" stroke="#111" strokeWidth="1" />
      </svg>
    </div>
  );
}
